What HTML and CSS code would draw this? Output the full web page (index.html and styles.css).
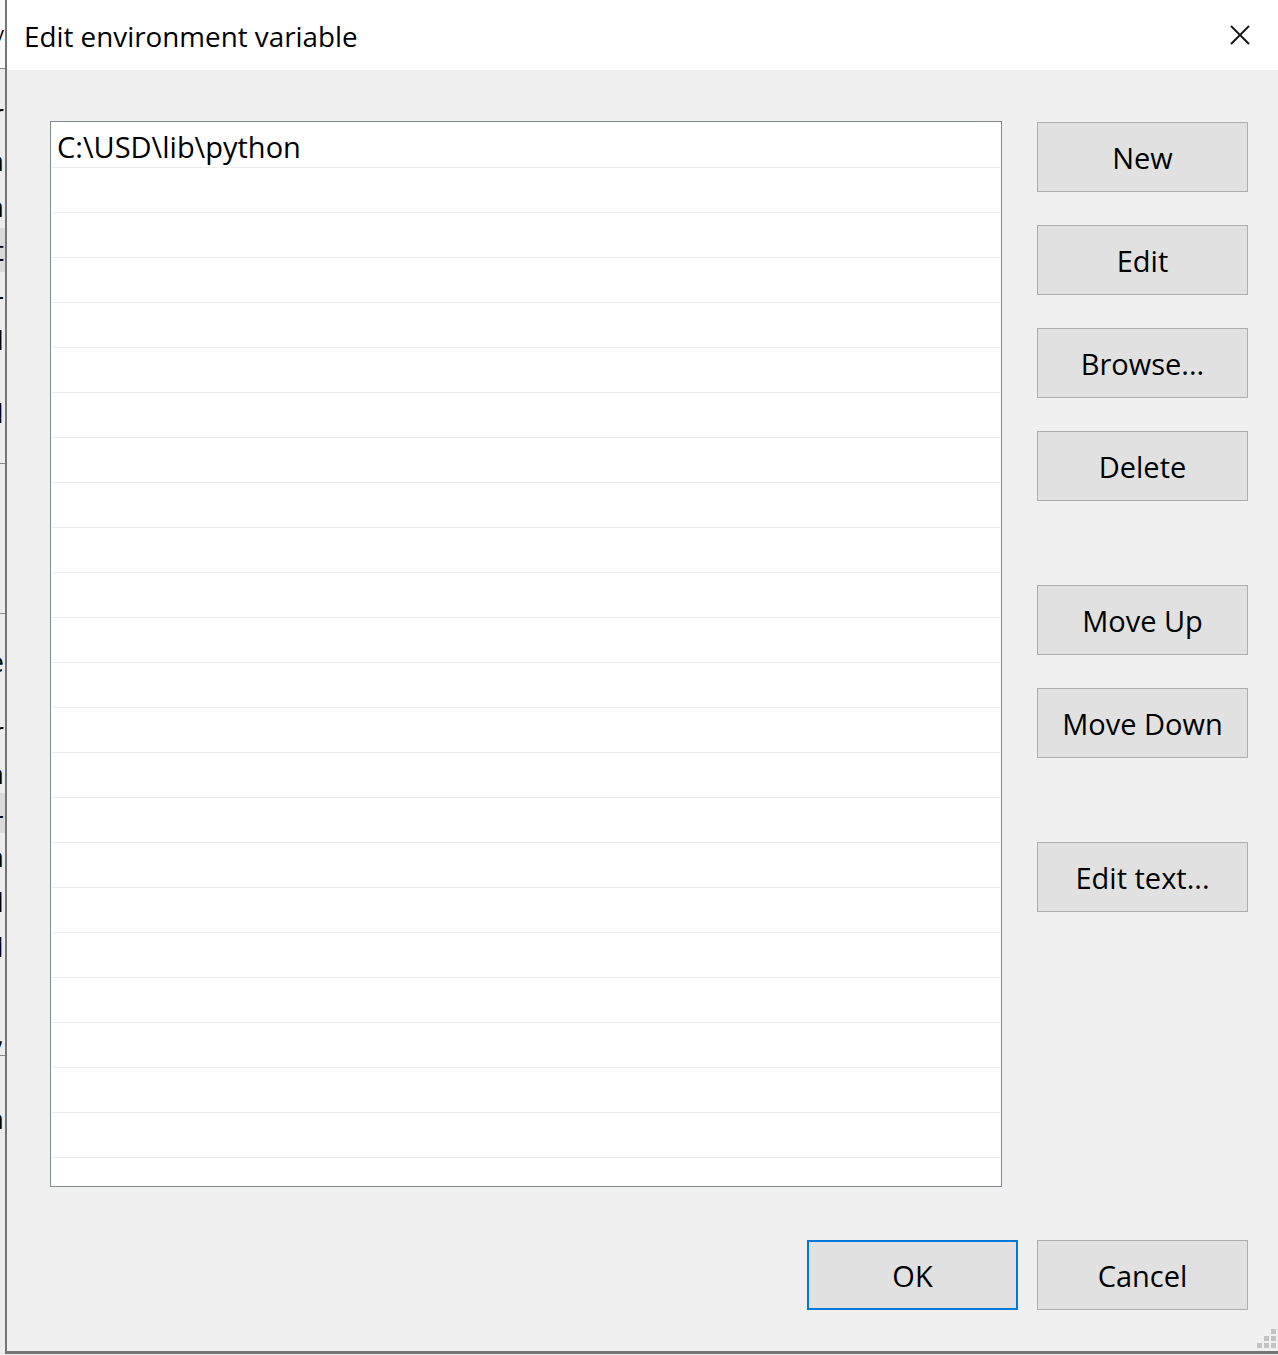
FILE: index.html
```html
<!DOCTYPE html>
<html lang="en">
<head>
<meta charset="utf-8">
<title>Edit environment variable</title>
<link rel="stylesheet" href="styles.css">
</head>
<body>
<div class="desk">
  <!-- the parent "Environment Variables" window peeking out on the left -->
  <div class="behind">
    <div class="bh-top"><span class="glyph sm">v</span></div>
    <div class="bh-panel">
      <div class="bh-item" style="height:47px"><span class="glyph">User</span></div>
      <div class="bh-item" style="height:47px"><span class="glyph">Path</span></div>
      <div class="bh-item" style="height:45px"><span class="glyph">Path</span></div>
      <div class="bh-item bh-btn" style="height:44px"><span class="glyph">Edit</span></div>
      <div class="bh-item" style="height:44px"><span class="glyph">-</span></div>
      <div class="bh-item" style="height:45px"><span class="glyph">N</span></div>
      <div class="bh-item" style="height:102px"><span class="glyph">M</span></div>
      <div class="bh-item bh-rule" style="height:150px"><span class="glyph"></span></div>
      <div class="bh-item bh-rule" style="height:95px"><span class="glyph">Value</span></div>
      <div class="bh-item" style="height:45px"><span class="glyph">Var</span></div>
      <div class="bh-item" style="height:40px"><span class="glyph">Path</span></div>
      <div class="bh-item bh-btn" style="height:40px"><span class="glyph">-</span></div>
      <div class="bh-item" style="height:45px"><span class="glyph">Path</span></div>
      <div class="bh-item" style="height:45px"><span class="glyph">N</span></div>
      <div class="bh-item" style="height:45px"><span class="glyph">M</span></div>
      <div class="bh-item" style="height:42px"><span class="glyph accent">|</span></div>
      <div class="bh-item" style="height:45px"><span class="glyph">,</span></div>
      <div class="bh-item bh-rule" style="height:124px"><span class="glyph">n</span></div>
      <div class="bh-item" style="height:176px"><span class="glyph"></span></div>
    </div>
  </div>

  <div class="dialog">
    <div class="titlebar">
      <span class="title">Edit environment variable</span>
      <button class="close" aria-label="Close">
        <svg width="20" height="20" viewBox="0 0 20 20">
          <path d="M1 1 L19 19 M19 1 L1 19" stroke="#111" stroke-width="1.8" fill="none"/>
        </svg>
      </button>
    </div>

    <div class="content">
      <div class="main">
        <div class="list">
          <div class="row">C:\USD\lib\python</div>
          <div class="row"></div>
          <div class="row"></div>
          <div class="row"></div>
          <div class="row"></div>
          <div class="row"></div>
          <div class="row"></div>
          <div class="row"></div>
          <div class="row"></div>
          <div class="row"></div>
          <div class="row"></div>
          <div class="row"></div>
          <div class="row"></div>
          <div class="row"></div>
          <div class="row"></div>
          <div class="row"></div>
          <div class="row"></div>
          <div class="row"></div>
          <div class="row"></div>
          <div class="row"></div>
          <div class="row"></div>
          <div class="row"></div>
          <div class="row"></div>
          <div class="row"></div>
        </div>

        <div class="side">
          <button class="btn">New</button>
          <button class="btn">Edit</button>
          <button class="btn">Browse...</button>
          <button class="btn">Delete</button>
          <button class="btn gap-lg">Move Up</button>
          <button class="btn">Move Down</button>
          <button class="btn gap-lg">Edit text...</button>
        </div>
      </div>

      <div class="footer">
        <button class="btn default">OK</button>
        <button class="btn">Cancel</button>
      </div>

      <div class="grip">
        <i style="grid-area:1/3"></i>
        <i style="grid-area:2/2"></i><i style="grid-area:2/3"></i>
        <i style="grid-area:3/1"></i><i style="grid-area:3/2"></i><i style="grid-area:3/3"></i>
      </div>
    </div>
  </div>
</div>
</body>
</html>
```

FILE: styles.css
```css
* { box-sizing: border-box; }

html, body {
  margin: 0;
  padding: 0;
  background: #f0f0f0;
}

body {
  font-family: "Open Sans", "Noto Sans", "DejaVu Sans", sans-serif;
  color: #000;
  overflow: hidden;
}

.desk {
  display: flex;
  width: 1278px;
  height: 1355px;
  overflow: hidden;
}

/* ---- parent window strip ---- */
.behind {
  width: 5px;
  flex: none;
  display: flex;
  flex-direction: column;
  background: #f0f0f0;
}

.bh-top {
  height: 83px;
  background: #fafafa;
  border-bottom: 1px solid #8a8a8a;
  display: flex;
  justify-content: flex-end;
  align-items: center;
  overflow: hidden;
}

.bh-panel {
  display: flex;
  flex-direction: column;
  padding-top: 20px;
  background: #ececec;
}

.bh-item {
  display: flex;
  justify-content: flex-end;
  align-items: center;
  overflow: hidden;
  white-space: nowrap;
}

.bh-btn { background: #dadada; }
.bh-rule { border-top: 1px solid #8a8a8a; }

.glyph {
  font-size: 28px;
  line-height: 1;
  margin-right: 1px;
  color: #000;
}
.glyph.sm { font-size: 20px; }
.glyph.accent { color: #d68a1c; }

/* ---- dialog ---- */
.dialog {
  flex: 1;
  position: relative;
  height: 1354px;
  border-left: 2px solid #747474;
  border-bottom: 3px solid #747474;
  background: #f0f0f0;
  display: flex;
  flex-direction: column;
}

.titlebar {
  height: 70px;
  flex: none;
  background: #fff;
  display: flex;
  align-items: center;
  justify-content: space-between;
  padding-left: 17px;
  padding-right: 18px;
}

.title {
  font-size: 27.8px;
  padding-top: 1px;
}

.close {
  border: 0;
  background: transparent;
  padding: 0;
  width: 40px;
  height: 40px;
  display: flex;
  align-items: center;
  justify-content: center;
}

.content {
  flex: 1;
  padding: 51px 0 0 43px;
  display: flex;
  flex-direction: column;
}

.main {
  display: flex;
  gap: 35px;
}

.list {
  width: 952px;
  height: 1066px;
  background: #fff;
  border: 1px solid #828790;
  padding: 1px 1px 0 1px;
  overflow: hidden;
  flex: none;
}

.row {
  height: 45px;
  border-bottom: 1px solid #ececec;
  padding-left: 5px;
  padding-top: 2px;
  font-size: 29px;
  line-height: 44px;
  white-space: nowrap;
}

.side {
  display: flex;
  flex-direction: column;
  padding-top: 1px;
  gap: 33px;
}

.btn {
  width: 211px;
  height: 70px;
  background: #e1e1e1;
  border: 1px solid #adadad;
  font-family: inherit;
  font-size: 29px;
  color: #000;
  padding: 0;
  display: flex;
  align-items: center;
  justify-content: center;
}

.side .gap-lg { margin-top: 51px; }

.footer {
  display: flex;
  gap: 19px;
  margin-top: 53px;
  padding-left: 757px;
}

.btn.default {
  border: 2px solid #0078d7;
}

/* size grip in the lower-right corner */
.grip {
  position: absolute;
  right: 2px;
  bottom: 3px;
  display: grid;
  grid-template-columns: repeat(3, 5px);
  grid-template-rows: repeat(3, 5px);
  gap: 2px;
}

.grip i {
  display: block;
  background: #c3c3c3;
}
```
